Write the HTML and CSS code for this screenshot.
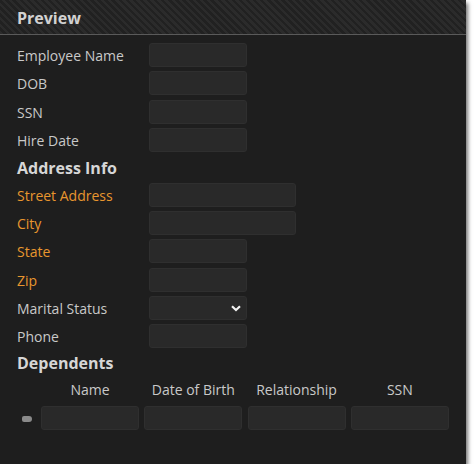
FILE: index.html
```html
<!DOCTYPE html>
<html>
<head>
<meta charset="utf-8">
<link rel="stylesheet" href="styles.css">
</head>
<body>
<div class="panel">
  <div class="header"><span class="title">Preview</span></div>
  <div class="body">
    <div class="form">
      <div class="label">Employee Name</div><div class="input"></div>
      <div class="label">DOB</div><div class="input"></div>
      <div class="label">SSN</div><div class="input"></div>
      <div class="label">Hire Date</div><div class="input"></div>
    </div>
    <div class="section">Address Info</div>
    <div class="form">
      <div class="label req">Street Address</div><div class="input wide"></div>
      <div class="label req">City</div><div class="input wide"></div>
      <div class="label req">State</div><div class="input"></div>
      <div class="label req">Zip</div><div class="input"></div>
      <div class="label">Marital Status</div>
      <div class="input select">
        <svg class="chev" width="10" height="7" viewBox="0 0 10 7"><path d="M1 1.2 L5 5 L9 1.2" fill="none" stroke="#f2f2f2" stroke-width="2.2"/></svg>
      </div>
      <div class="label">Phone</div><div class="input"></div>
    </div>
    <div class="section dep">Dependents</div>
    <div class="grid">
      <div class="cell"></div>
      <div class="colhead">Name</div>
      <div class="colhead">Date of Birth</div>
      <div class="colhead">Relationship</div>
      <div class="colhead">SSN</div>
      <div class="cell"><span class="marker"></span></div>
      <div class="input"></div>
      <div class="input"></div>
      <div class="input"></div>
      <div class="input"></div>
    </div>
  </div>
</div>
</body>
</html>
```
FILE: styles.css
```css
html, body {
  margin: 0;
  padding: 0;
  background: #ffffff;
}
body {
  font-family: "Open Sans", "Noto Sans", sans-serif;
}
.panel {
  width: 466px;
  height: 464px;
  background: #1e1e1e;
  box-shadow: 2px 3px 4px rgba(0, 0, 0, 0.55);
  box-sizing: border-box;
}
.header {
  height: 34px;
  border-bottom: 1px solid #5a5a5a;
  background: repeating-linear-gradient(45deg, #2b2b2b 0 2.5px, #212121 2.5px 5px);
  display: flex;
  align-items: center;
  padding-left: 17px;
}
.title {
  color: #d2d2d2;
  font-weight: 700;
  font-size: 16px;
  padding-top: 1px;
}
.body {
  padding: 8px 0 0 17px;
}
.form {
  display: grid;
  grid-template-columns: 132px auto;
  row-gap: 4.3px;
  align-items: center;
}
.label {
  color: #c9c9c9;
  font-size: 14px;
  line-height: 26px;
  height: 24px;
}
.label.req {
  color: #e8962e;
}
.input {
  width: 98px;
  height: 24px;
  box-sizing: border-box;
  background: #292929;
  border: 1px solid #2f2f2f;
  border-radius: 3px;
}
.input.wide {
  width: 147px;
}
.select {
  display: flex;
  align-items: center;
  justify-content: flex-end;
  padding-right: 5px;
}
.chev {
  display: block;
}
.section {
  color: #d6d6d6;
  font-weight: 700;
  font-size: 16px;
  line-height: 22px;
  height: 22px;
  padding: 5px 0 4px;
}
.section.dep {
  padding: 4px 0 0;
}
.grid {
  display: grid;
  grid-template-columns: 18.7px 98px 98px 98px 98px;
  column-gap: 5.3px;
  row-gap: 4px;
  align-items: center;
  padding-top: 4px;
}
.colhead {
  color: #c9c9c9;
  font-size: 14px;
  line-height: 24px;
  text-align: center;
}
.cell {
  display: flex;
  align-items: center;
  padding-left: 5px;
  padding-top: 2px;
}
.marker {
  width: 10px;
  height: 6px;
  background: #8a8a8a;
  border-radius: 2px 3px 3px 2px;
}
```
